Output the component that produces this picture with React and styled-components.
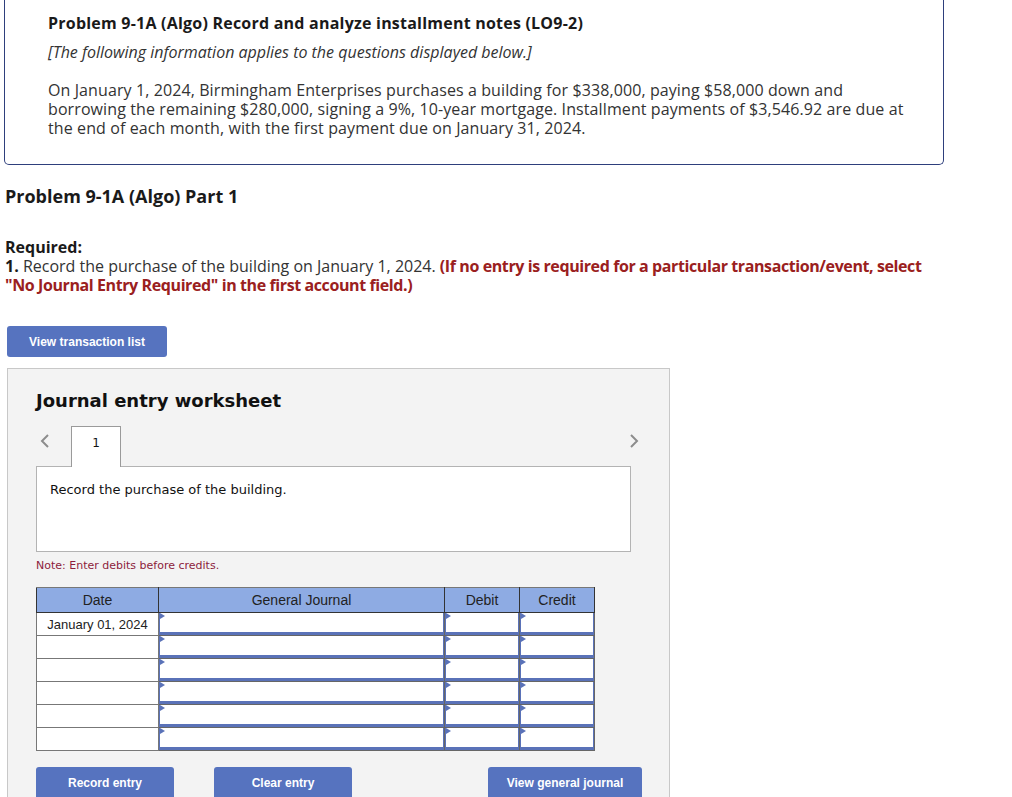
import React from "react";
import styled, { createGlobalStyle } from "styled-components";

const GlobalStyle = createGlobalStyle`
  body {
    margin: 0;
    background: #fff;
    font-family: "Open Sans", Lato, sans-serif;
    color: #222;
  }
`;

const rows = ["January 01, 2024", "", "", "", "", ""];

const ChevronIcon = ({ dir }) => (
  <svg width="10" height="16" viewBox="0 0 10 16">
    <path
      d={dir === "left" ? "M8 2 L2 8 L8 14" : "M2 2 L8 8 L2 14"}
      fill="none"
      stroke="#8c8c8c"
      strokeWidth="2"
    />
  </svg>
);

function App() {
  return (
    <Page>
      <GlobalStyle />
      <InfoBox>
        <InfoTitle>Problem 9-1A (Algo) Record and analyze installment notes (LO9-2)</InfoTitle>
        <InfoNote>[The following information applies to the questions displayed below.]</InfoNote>
        <InfoText>
          On January 1, 2024, Birmingham Enterprises purchases a building for $338,000, paying $58,000 down and
          <br />
          borrowing the remaining $280,000, signing a 9%, 10-year mortgage. Installment payments of $3,546.92 are due at
          <br />
          the end of each month, with the first payment due on January 31, 2024.
        </InfoText>
      </InfoBox>

      <PartTitle>Problem 9-1A (Algo) Part 1</PartTitle>

      <Required>
        <b>Required:</b>
        <br />
        <b>1.</b> Record the purchase of the building on January 1, 2024.{" "}
        <Warn>
          (If no entry is required for a particular transaction/event, select
          <br />
          "No Journal Entry Required" in the first account field.)
        </Warn>
      </Required>

      <ListButton>View transaction list</ListButton>

      <Worksheet>
        <WsTitle>Journal entry worksheet</WsTitle>
        <TabRow>
          <Chevron><ChevronIcon dir="left" /></Chevron>
          <Tab>1</Tab>
          <Spacer />
          <Chevron><ChevronIcon dir="right" /></Chevron>
        </TabRow>
        <Instruction>Record the purchase of the building.</Instruction>
        <Note>Note: Enter debits before credits.</Note>

        <Journal>
          <colgroup>
            <col style={{ width: 122 }} />
            <col style={{ width: 286 }} />
            <col style={{ width: 75 }} />
            <col style={{ width: 75 }} />
          </colgroup>
          <thead>
            <tr>
              <Th>Date</Th>
              <Th>General Journal</Th>
              <Th>Debit</Th>
              <Th>Credit</Th>
            </tr>
          </thead>
          <tbody>
            {rows.map((d, i) => (
              <tr key={i}>
                <DateCell>{d}</DateCell>
                <InputCell><Field /></InputCell>
                <InputCell><Field /></InputCell>
                <InputCell><Field /></InputCell>
              </tr>
            ))}
          </tbody>
        </Journal>

        <Actions>
          <ActionButton $w={138}>Record entry</ActionButton>
          <ActionButton $w={138} $ml={40}>Clear entry</ActionButton>
          <ActionButton $w={154} $ml={136}>View general journal</ActionButton>
        </Actions>
      </Worksheet>
    </Page>
  );
}

export default App;

const Page = styled.div`
  padding: 0 4px;
  height: 797px;
  overflow: hidden;
`;

const InfoBox = styled.div`
  width: 940px;
  box-sizing: border-box;
  border: 1px solid #2e3f7c;
  border-top: none;
  border-radius: 0 0 5px 5px;
  padding: 13px 0 26px 43px;
`;

const InfoTitle = styled.div`
  font-size: 16px;
  font-weight: 700;
  line-height: 20px;
  letter-spacing: 0.22px;
  color: #1a1a1a;
`;

const InfoNote = styled.div`
  margin-top: 10px;
  font-size: 16px;
  font-style: italic;
  line-height: 19px;
  color: #333;
`;

const InfoText = styled.div`
  margin-top: 19px;
  font-size: 16px;
  line-height: 19px;
  letter-spacing: 0.1px;
  color: #333;
  white-space: nowrap;
`;

const PartTitle = styled.div`
  margin-top: 20px;
  padding-left: 1px;
  font-size: 18px;
  font-weight: 700;
  line-height: 22px;
  color: #1a1a1a;
`;

const Required = styled.div`
  margin-top: 31px;
  padding-left: 1px;
  font-size: 16px;
  line-height: 19px;
  color: #333;
  white-space: nowrap;

  b {
    color: #1a1a1a;
  }
`;

const Warn = styled.span`
  font-weight: 700;
  letter-spacing: -0.4px;
  color: #9a2020;
`;

const ListButton = styled.button`
  display: block;
  margin: 31px 0 0 3px;
  width: 160px;
  height: 31px;
  border: none;
  border-radius: 3px;
  background: #5673bf;
  color: #fff;
  font-family: Arial, "Liberation Sans", sans-serif;
  font-size: 12px;
  font-weight: 700;
`;

const Worksheet = styled.div`
  margin: 11px 0 0 3px;
  width: 663px;
  height: 450px;
  box-sizing: border-box;
  border: 1px solid #c8c8c8;
  background: #f3f3f3;
  padding: 21px 0 0 28px;
  font-family: Verdana, "DejaVu Sans", sans-serif;
`;

const WsTitle = styled.div`
  font-size: 18px;
  font-weight: 700;
  line-height: 22px;
  color: #111;
`;

const TabRow = styled.div`
  margin-top: 14px;
  display: flex;
  align-items: stretch;
  width: 606px;
  height: 41px;
  margin-bottom: -1px;
  position: relative;
  z-index: 1;
`;

const Chevron = styled.div`
  width: 17px;
  display: flex;
  justify-content: center;
  align-items: flex-start;
  padding-top: 7px;
  box-sizing: border-box;

  &:first-child {
    margin-right: 18px;
  }
`;

const Tab = styled.div`
  width: 50px;
  box-sizing: border-box;
  border: 1px solid #9a9a9a;
  border-bottom: none;
  background: #fff;
  display: flex;
  justify-content: center;
  padding-top: 9px;
  font-size: 12px;
  color: #111;
`;

const Spacer = styled.div`
  flex: 1;
`;

const Instruction = styled.div`
  width: 595px;
  height: 86px;
  box-sizing: border-box;
  border: 1px solid #b3b3b3;
  background: #fff;
  padding: 15px 13px;
  font-size: 13px;
  color: #111;
`;

const Note = styled.div`
  margin-top: 7px;
  font-size: 11px;
  line-height: 14px;
  color: #8d1c3c;
`;

const Journal = styled.table`
  margin-top: 14px;
  width: 558px;
  border-collapse: collapse;
  table-layout: fixed;
  font-family: Arial, "Liberation Sans", sans-serif;
  color: #222;
`;

const Th = styled.th`
  height: 24px;
  padding: 0;
  background: #8eabe3;
  border: 1px solid #333;
  border-top-color: #777;
  font-size: 14px;
  font-weight: 400;
`;

const DateCell = styled.td`
  height: 22px;
  padding: 0;
  border: 1px solid #777;
  background: #fff;
  text-align: center;
  font-size: 13px;
`;

const InputCell = styled.td`
  height: 22px;
  padding: 0;
  border: 1px solid #666;
  background: #fff;
`;

const Field = styled.div`
  position: relative;
  height: 22px;
  box-sizing: border-box;
  border-left: 1px solid #5a72b8;
  border-right: 1px solid #5a72b8;
  border-bottom: 3px solid #5a72b8;

  &::before {
    content: "";
    position: absolute;
    left: 0;
    top: 0;
    border-left: 5px solid #5a72b8;
    border-top: 3px solid transparent;
    border-bottom: 3px solid transparent;
  }
`;

const Actions = styled.div`
  margin-top: 16px;
  display: flex;
`;

const ActionButton = styled.button`
  width: ${(p) => p.$w}px;
  margin-left: ${(p) => p.$ml || 0}px;
  height: 32px;
  border: none;
  border-radius: 3px;
  background: #5673bf;
  color: #fff;
  font-family: Arial, "Liberation Sans", sans-serif;
  font-size: 12px;
  font-weight: 700;
`;
